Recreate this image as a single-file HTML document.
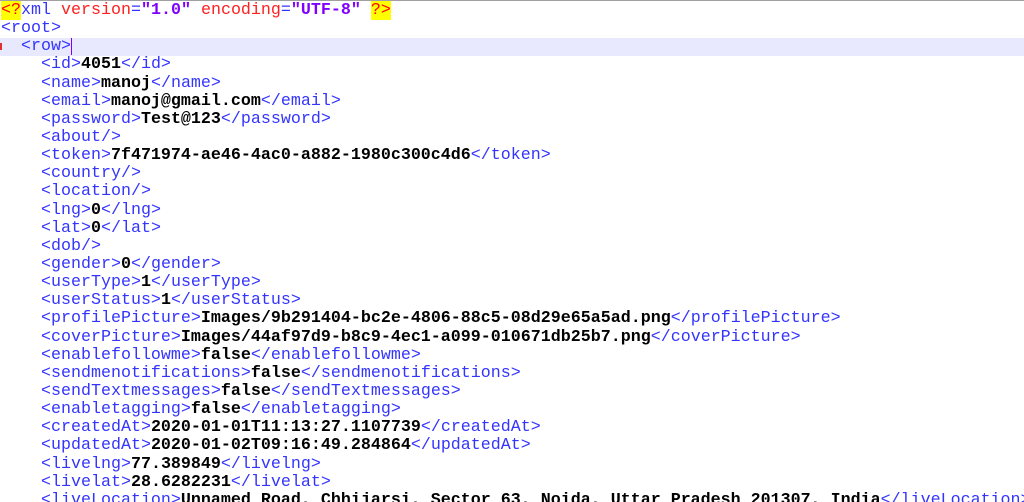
<!DOCTYPE html>
<html><head><meta charset="utf-8"><style>
html,body{margin:0;padding:0;background:#fff;width:1024px;height:502px;overflow:hidden}
body{position:relative;font-family:"Liberation Mono","Courier New",monospace;font-size:16.67px}
.w{position:absolute;left:0;top:2px;width:1024px}
.l{height:18.15px;line-height:18.15px;white-space:pre;width:1024px;padding-left:1px}
.t{color:#3434ff}
.v{color:#000;font-weight:bold}
.a{color:#ff2020}
.s{color:#8000ff;font-weight:bold}
.y{background:#ffff00;color:#ff0000}
.hl{background:#e8e8ff}
</style></head><body>
<div style="position:absolute;left:0;top:0;width:1024px;height:1px;background:#a0a0a0"></div>
<div class="w">
<div class="l"><span class="y">&lt;?</span><span class="t">xml</span> <span class="a">version</span><span class="t">=</span><span class="s">"1.0"</span> <span class="a">encoding</span><span class="t">=</span><span class="s">"UTF-8"</span> <span class="y">?&gt;</span></div>
<div class="l t">&lt;root&gt;</div>
<div class="l t hl">  &lt;row&gt;<span style="display:inline-block;width:1px;height:17px;background:#8000ff;vertical-align:top"></span></div>
<div class="l">    <span class="t">&lt;id&gt;</span><span class="v">4051</span><span class="t">&lt;/id&gt;</span></div>
<div class="l">    <span class="t">&lt;name&gt;</span><span class="v">manoj</span><span class="t">&lt;/name&gt;</span></div>
<div class="l">    <span class="t">&lt;email&gt;</span><span class="v">manoj@gmail.com</span><span class="t">&lt;/email&gt;</span></div>
<div class="l">    <span class="t">&lt;password&gt;</span><span class="v">Test@123</span><span class="t">&lt;/password&gt;</span></div>
<div class="l">    <span class="t">&lt;about/&gt;</span></div>
<div class="l">    <span class="t">&lt;token&gt;</span><span class="v">7f471974-ae46-4ac0-a882-1980c300c4d6</span><span class="t">&lt;/token&gt;</span></div>
<div class="l">    <span class="t">&lt;country/&gt;</span></div>
<div class="l">    <span class="t">&lt;location/&gt;</span></div>
<div class="l">    <span class="t">&lt;lng&gt;</span><span class="v">0</span><span class="t">&lt;/lng&gt;</span></div>
<div class="l">    <span class="t">&lt;lat&gt;</span><span class="v">0</span><span class="t">&lt;/lat&gt;</span></div>
<div class="l">    <span class="t">&lt;dob/&gt;</span></div>
<div class="l">    <span class="t">&lt;gender&gt;</span><span class="v">0</span><span class="t">&lt;/gender&gt;</span></div>
<div class="l">    <span class="t">&lt;userType&gt;</span><span class="v">1</span><span class="t">&lt;/userType&gt;</span></div>
<div class="l">    <span class="t">&lt;userStatus&gt;</span><span class="v">1</span><span class="t">&lt;/userStatus&gt;</span></div>
<div class="l">    <span class="t">&lt;profilePicture&gt;</span><span class="v">Images/9b291404-bc2e-4806-88c5-08d29e65a5ad.png</span><span class="t">&lt;/profilePicture&gt;</span></div>
<div class="l">    <span class="t">&lt;coverPicture&gt;</span><span class="v">Images/44af97d9-b8c9-4ec1-a099-010671db25b7.png</span><span class="t">&lt;/coverPicture&gt;</span></div>
<div class="l">    <span class="t">&lt;enablefollowme&gt;</span><span class="v">false</span><span class="t">&lt;/enablefollowme&gt;</span></div>
<div class="l">    <span class="t">&lt;sendmenotifications&gt;</span><span class="v">false</span><span class="t">&lt;/sendmenotifications&gt;</span></div>
<div class="l">    <span class="t">&lt;sendTextmessages&gt;</span><span class="v">false</span><span class="t">&lt;/sendTextmessages&gt;</span></div>
<div class="l">    <span class="t">&lt;enabletagging&gt;</span><span class="v">false</span><span class="t">&lt;/enabletagging&gt;</span></div>
<div class="l">    <span class="t">&lt;createdAt&gt;</span><span class="v">2020-01-01T11:13:27.1107739</span><span class="t">&lt;/createdAt&gt;</span></div>
<div class="l">    <span class="t">&lt;updatedAt&gt;</span><span class="v">2020-01-02T09:16:49.284864</span><span class="t">&lt;/updatedAt&gt;</span></div>
<div class="l">    <span class="t">&lt;livelng&gt;</span><span class="v">77.389849</span><span class="t">&lt;/livelng&gt;</span></div>
<div class="l">    <span class="t">&lt;livelat&gt;</span><span class="v">28.6282231</span><span class="t">&lt;/livelat&gt;</span></div>
<div class="l">    <span class="t">&lt;liveLocation&gt;</span><span class="v">Unnamed Road, Chhijarsi, Sector 63, Noida, Uttar Pradesh 201307, India</span><span class="t">&lt;/liveLocation&gt;</span></div>
</div>
<div style="position:absolute;left:0;top:43px;width:2px;height:7px;background:#e03030"></div>
</body></html>
